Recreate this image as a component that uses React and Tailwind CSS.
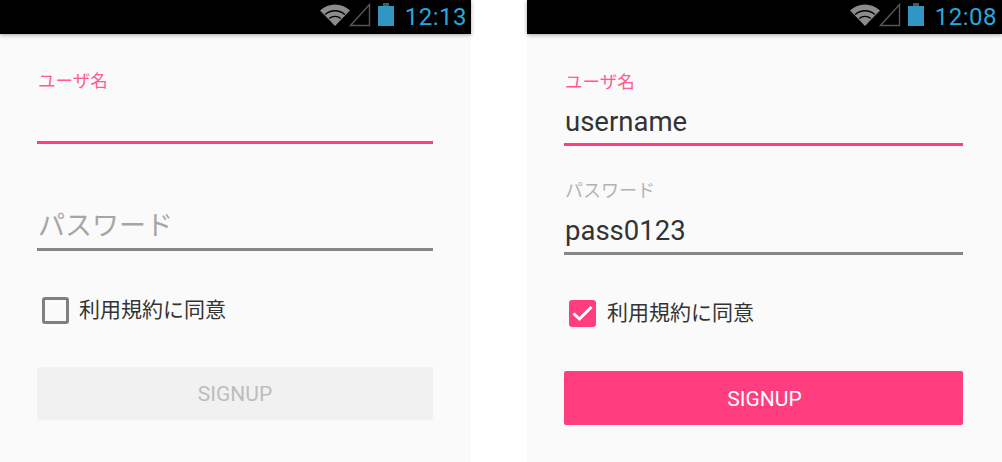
import React from "react";

const font = { roboto: "font-['Roboto','Noto_Sans_CJK_JP',sans-serif]" };

const StatusBar = ({ time, pr }) => (
  <div className={`h-[34px] bg-black flex items-center justify-end shadow-[0_1px_4px_rgba(0,0,0,0.35)] ${pr}`}>
    <svg width="30" height="22" viewBox="0 0 30 22" className="mt-[-4px]">
      <path d="M0 6.5 C8 -1.5 22 -1.5 30 6.5 L15 22 Z" fill="#8c8c8c" />
      <path d="M5.2 10.5 C10.5 5.5 19.5 5.5 24.8 10.5" fill="none" stroke="#000" strokeWidth="1.3" />
      <path d="M9.2 14.6 C12.5 11.6 17.5 11.6 20.8 14.6" fill="none" stroke="#000" strokeWidth="1.3" />
    </svg>
    <svg width="22" height="24" viewBox="0 0 22 24" className="mt-[-4px] ml-[-1px]">
      <path d="M20.5 1.5 L20.5 22.5 L1.5 22.5 Z" fill="none" stroke="#555" strokeWidth="1.4" />
    </svg>
    <svg width="16" height="23" viewBox="0 0 16 23" className="ml-[7px] mt-[-5px]">
      <rect x="5" y="0" width="6" height="3" fill="#555" />
      <rect x="0" y="3" width="16" height="20" fill="#3395c4" />
    </svg>
    <span className={`${font.roboto} text-[#29a8dc] text-[24px] leading-none ml-[11px] tracking-[0.5px]`}>{time}</span>
  </div>
);

const Checkbox = ({ checked }) =>
  checked ? (
    <div className="w-[27px] h-[27px] rounded-[3px] bg-[#ff3d7f] flex items-center justify-center">
      <svg width="21" height="17" viewBox="0 0 21 17">
        <path d="M1.5 8.5 L7.5 14 L19.5 2" fill="none" stroke="#fff" strokeWidth="3" />
      </svg>
    </div>
  ) : (
    <div className="w-[27px] h-[27px] rounded-[3px] border-[3px] border-[#7f7f7f]" />
  );

const App = () => (
  <div className={`w-[1002px] h-[462px] bg-white flex justify-between overflow-hidden ${font.roboto}`}>
    <div className="w-[471px] h-full bg-[#fafafa] flex flex-col">
      <StatusBar time="12:13" pr="pr-[4px]" />
      <div className="flex flex-col pl-[37px] pr-[38px]">
        <div className="text-[#ff5a92] text-[17.5px] leading-[24px] mt-[35px] pl-[1px]">ユーザ名</div>
        <div className="h-[3px] bg-[#ff3d7f] mt-[48px]" />
        <div className="text-[#a6a6a6] text-[27px] leading-[36px] mt-[64px] pl-[1px]">パスワード</div>
        <div className="h-[3px] bg-[#868686] mt-[4px]" />
        <div className="flex items-center gap-[10px] mt-[46px] pl-[5px]">
          <Checkbox />
          <span className="text-[#333] text-[21px] leading-[27px]">利用規約に同意</span>
        </div>
        <button className="h-[53px] mt-[43px] pt-[3px] rounded-[2px] bg-[#f1f1f1] text-[#bdbdbd] text-[21px]">SIGNUP</button>
      </div>
    </div>
    <div className="w-[475px] h-full bg-[#fafafa] flex flex-col">
      <StatusBar time="12:08" pr="pr-[5px]" />
      <div className="flex flex-col pl-[37px] pr-[39px]">
        <div className="text-[#ff5a92] text-[17.5px] leading-[24px] mt-[36px] pl-[1px]">ユーザ名</div>
        <div className="text-[#333] text-[27.5px] leading-[34px] mt-[11px] pl-[1px]">username</div>
        <div className="h-[3px] bg-[#ff3d7f] mt-[4px]" />
        <div className="text-[#b3b3b3] text-[18px] leading-[24px] mt-[33px] pl-[1px]">パスワード</div>
        <div className="text-[#333] text-[27.5px] leading-[34px] mt-[11px] pl-[1px]">pass0123</div>
        <div className="h-[3px] bg-[#868686] mt-[4px]" />
        <div className="flex items-center gap-[11px] mt-[45px] pl-[5px]">
          <Checkbox checked />
          <span className="text-[#333] text-[21px] leading-[27px]">利用規約に同意</span>
        </div>
        <button className="h-[54px] mt-[44px] pt-[3px] pl-[2px] rounded-[2px] bg-[#ff3d7f] text-white text-[21px]">SIGNUP</button>
      </div>
    </div>
  </div>
);

export default App;
